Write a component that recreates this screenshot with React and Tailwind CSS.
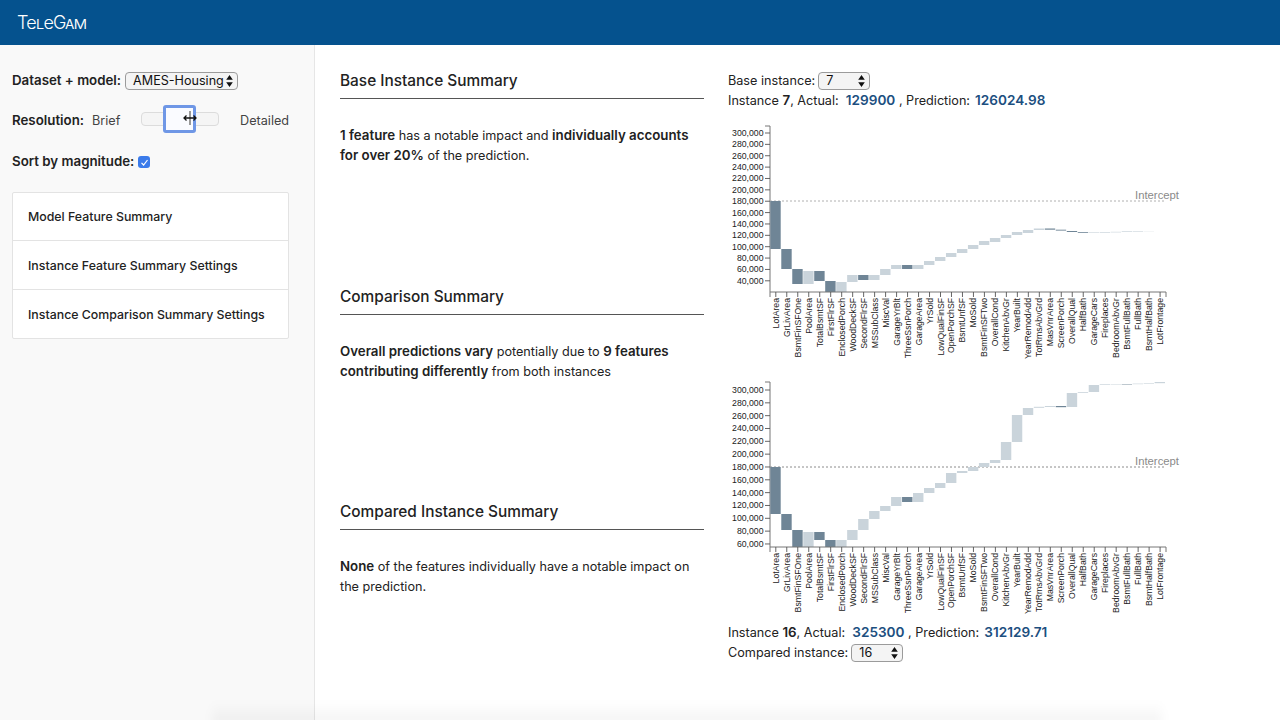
import React from 'react';

const names = ['LotArea','GrLivArea','BsmtFinSFOne','PoolArea','TotalBsmtSF','FirstFlrSF','EnclosedPorch','WoodDeckSF','SecondFlrSF','MSSubClass','MiscVal','GarageYrBlt','ThreeSsnPorch','GarageArea','YrSold','LowQualFinSF','OpenPorchSF','BsmtUnfSF','MoSold','BsmtFinSFTwo','OverallCond','KitchenAbvGr','YearBuilt','YearRemodAdd','TotRmsAbvGrd','MasVnrArea','ScreenPorch','OverallQual','HalfBath','GarageCars','Fireplaces','BedroomAbvGr','BsmtFullBath','FullBath','BsmtHalfBath','LotFrontage'];

const D = '#6f8596';
const L = '#cad4db';

const bars1 = [
  [201,249,D],[249,269,D],[269,284,D],[271,284,L],[271,281,D],[281,292,D],[282,292,L],[275,282,L],[275,280,D],[275,280,L],
  [269,275,L],[265,269,L],[265,269,D],[265,269,L],[261,265,L],[257,261,L],[253,257,L],[249,253,L],[245,249,L],[241,245,L],
  [238,242,L],[235,238,L],[232,235,L],[230,233,L],[228.5,230,L],[228.5,229.7,D],[229.7,230.6,D],[231,232,D],[232,232.8,D],[232.4,233,L],
  [232,232.7,L],[231.8,232.4,L],[231.3,232,L],[231.3,231.9,L],[231.3,231.7,'#e2e7ea'],
];

const bars2 = [
  [467,514,D],[514,530,D],[530,547,D],[532,547,L],[532,540,D],[540,547,D],[540,547,L],[530,540,L],[519,530,L],[511,519,L],
  [506,511,L],[497,506,L],[497,502,D],[493,502,L],[488,493,L],[483,488,L],[473,483,L],[471,473,L],[467,471,L],[463,467,L],
  [460,463,L],[442,460,L],[415,442,L],[408,415,L],[406.8,407.8,L],[406,407,L],[406,407.2,D],[393,407,L],[392,392.8,L],[385,392,L],
  [384,384.7,L],[384,384.5,L],[384,384.8,'#aebbc4'],[383.6,384.2,L],[383.2,383.8,L],[382,383.2,L],
];

function Chart({ top, height, bars, ticks, axisTop, axisBottom, intercept, dash }) {
  return (
    <svg className="block" width="460" height={height} viewBox={`728 ${top} 460 ${height}`} fontFamily="'Liberation Sans', sans-serif">
      <path d={`M765 ${axisTop}H770V${axisBottom}`} fill="none" stroke="#777" strokeWidth="1" />
      {ticks.map(([label, y]) => (
        <g key={label}>
          <line x1="765" x2="770" y1={y} y2={y} stroke="#555" strokeWidth="0.9" />
          <text x="763.5" y={y + 3} textAnchor="end" fontSize="8.7" fill="#222">{label}</text>
        </g>
      ))}
      <line x1="770" x2="1166" y1={intercept} y2={intercept} stroke={dash} strokeWidth="1" strokeDasharray="2 2" />
      <text x="1179" y={intercept - 2.5} textAnchor="end" fontSize="11.3" fill="#8a8a8a">Intercept</text>
      {bars.map(([y0, y1, c], i) => (
        <rect key={i} x={770.3 + i * 10.98} y={y0} width="10.4" height={y1 - y0} fill={c} />
      ))}
      <path d={`M770 ${axisBottom + 5}V${axisBottom}H1166V${axisBottom + 5}`} fill="none" stroke="#777" strokeWidth="1" />
      {names.map((n, i) => {
        const x = 775.8 + i * 10.98;
        return (
          <g key={n}>
            <line x1={x} x2={x} y1={axisBottom} y2={axisBottom + 5} stroke="#555" strokeWidth="0.9" />
            <text transform={`translate(${x + 3},${axisBottom + 6}) rotate(-90)`} textAnchor="end" fontSize="8.7" fill="#222">{n}</text>
          </g>
        );
      })}
    </svg>
  );
}

function Updown() {
  return (
    <svg width="7" height="13" viewBox="0 0 7 13" className="absolute right-[4px] top-1/2 -translate-y-1/2">
      <path d="M3.5 0.5L6.8 5.3H0.2Z M3.5 12.5L0.2 7.7H6.8Z" fill="#111" />
    </svg>
  );
}

function Select({ value, width }) {
  return (
    <span className={`relative inline-flex h-[18px] items-center rounded-[4px] border border-[#9b9b9b] bg-[#f4f4f4] pl-[7px] text-[12.6px] text-[#111] ${width}`}>
      {value}
      <Updown />
    </span>
  );
}

function Bold({ children }) {
  return <b className="text-[13.3px] font-semibold leading-none">{children}</b>;
}

function Section({ title, children }) {
  return (
    <section className="h-[215.5px]">
      <h2 className="h-[27px] border-b border-[#555] text-[15.4px] font-medium leading-[18px] text-[#222]">{title}</h2>
      <p className="mt-[27px] text-[12.65px] leading-[20px] text-[#222]">{children}</p>
    </section>
  );
}

function Prediction({ id, actual, pred }) {
  return (
    <div className="h-[20px] text-[12.65px] leading-[22px] text-[#222]">
      Instance <Bold>{id}</Bold>, Actual:&nbsp; <b className="text-[13.6px] font-semibold leading-none text-[#1c4f7f]">{actual}</b> , Prediction:&nbsp; <b className="-ml-[2px] text-[13.6px] font-semibold leading-none text-[#1c4f7f]">{pred}</b>
    </div>
  );
}

export default function App() {
  return (
    <div className="relative flex h-[720px] w-[1280px] flex-col overflow-hidden bg-white font-['Inter',sans-serif]">
      <header className="flex h-[45px] shrink-0 items-center bg-[#05528e] pl-[17px] text-[18px] font-light tracking-[-0.9px] text-white [font-variant:small-caps]">
        TeleGam
      </header>
      <div className="flex min-h-0 flex-1">
        <aside className="w-[315px] shrink-0 border-r border-[#e6e6e6] bg-[#f9f9f9] px-[12px] pt-[26px] text-[12.65px] text-[#222]">
          <div className="flex h-[20px] items-center gap-[4px]">
            <Bold>Dataset + model:</Bold>
            <Select value="AMES-Housing" width="w-[113px]" />
          </div>
          <div className="mt-[20px] flex h-[20px] items-center">
            <Bold>Resolution:</Bold>
            <span className="ml-[8px] w-[49px] text-[#444]">Brief</span>
            <span className="relative mb-[4px] h-[14px] w-[78px] rounded-[4px] border border-[#dcdcdc] bg-[#f5f5f5]">
              <span className="absolute left-[21px] top-[-8px] h-[28px] w-[33px] rounded-[3px] border-[3px] border-[#6f97e6] bg-[#fafbff]" />
              <svg className="absolute left-[41px] top-[-3px]" width="14" height="16" viewBox="0 0 14 16">
                <path d="M7 1V15" stroke="#999" strokeWidth="2" />
                <path d="M1 8H13M3.5 5.5L1 8L3.5 10.5M10.5 5.5L13 8L10.5 10.5" fill="none" stroke="#111" strokeWidth="1.3" />
              </svg>
            </span>
            <span className="ml-[21px] text-[#444]">Detailed</span>
          </div>
          <div className="mt-[21px] flex h-[20px] items-center gap-[4px]">
            <Bold>Sort by magnitude:</Bold>
            <span className="flex h-[12px] w-[12px] items-center justify-center rounded-[3px] bg-[#3b7bea]">
              <svg width="9" height="9" viewBox="0 0 9 9"><path d="M1.5 4.8L3.6 7L7.5 2" fill="none" stroke="#fff" strokeWidth="1.2" /></svg>
            </span>
          </div>
          <div className="mt-[20px] w-[277px] rounded-[2px] border border-[#e3e3e3] bg-white text-[12.35px] font-medium text-[#222]">
            <div className="flex h-[48px] items-center border-b border-[#e3e3e3] pl-[15px] pt-[2px]">Model Feature Summary</div>
            <div className="flex h-[49px] items-center border-b border-[#e3e3e3] pl-[15px] pt-[2px]">Instance Feature Summary Settings</div>
            <div className="flex h-[48px] items-center pl-[15px] pt-[2px]">Instance Comparison Summary Settings</div>
          </div>
        </aside>
        <main className="flex min-w-0 flex-1 pl-[25px] pt-[27px]">
          <div className="w-[364px] shrink-0">
            <Section title="Base Instance Summary">
              <Bold>1 feature</Bold> has a notable impact and <Bold>individually accounts for over 20%</Bold> of the prediction.
            </Section>
            <Section title="Comparison Summary">
              <Bold>Overall predictions vary</Bold> potentially due to <Bold>9 features contributing differently</Bold> from both instances
            </Section>
            <Section title="Compared Instance Summary">
              <Bold>None</Bold> of the features individually have a notable impact on the prediction.
            </Section>
          </div>
          <div className="ml-[24px] flex-1">
            <div className="-mt-[1px] flex h-[20px] items-center gap-[3px] text-[12.65px] text-[#222]">
              Base instance: <Select value="7" width="w-[52px]" />
            </div>
            <div className="-mt-[1px]">
              <Prediction id="7" actual="129900" pred="126024.98" />
            </div>
            <div className="mt-[14px]">
              <Chart top={124} height={236} bars={bars1} axisTop={126} axisBottom={292} intercept={201} dash="#b0b0b0"
                ticks={[300,280,260,240,220,200,180,160,140,120,100,80,60,40].map((v, i) => [`${v},000`, 133 + i * 11.37])} />
            </div>
            <div className="mt-[20px]">
              <Chart top={380} height={242} bars={bars2} axisTop={382} axisBottom={547} intercept={467} dash="#8c8c8c"
                ticks={[300,280,260,240,220,200,180,160,140,120,100,80,60].map((v, i) => [`${v},000`, 390 + i * 12.83])} />
            </div>
            <Prediction id="16" actual="325300" pred="312129.71" />
            <div className="mt-[1px] flex h-[20px] items-center gap-[3px] text-[12.65px] text-[#222]">
              Compared instance: <Select value="16" width="w-[52px]" />
            </div>
          </div>
        </main>
      </div>
      <div className="pointer-events-none absolute bottom-[-6px] left-[212px] h-[24px] w-[950px] bg-linear-to-t from-black/5 to-transparent blur-[5px]" />
    </div>
  );
}
